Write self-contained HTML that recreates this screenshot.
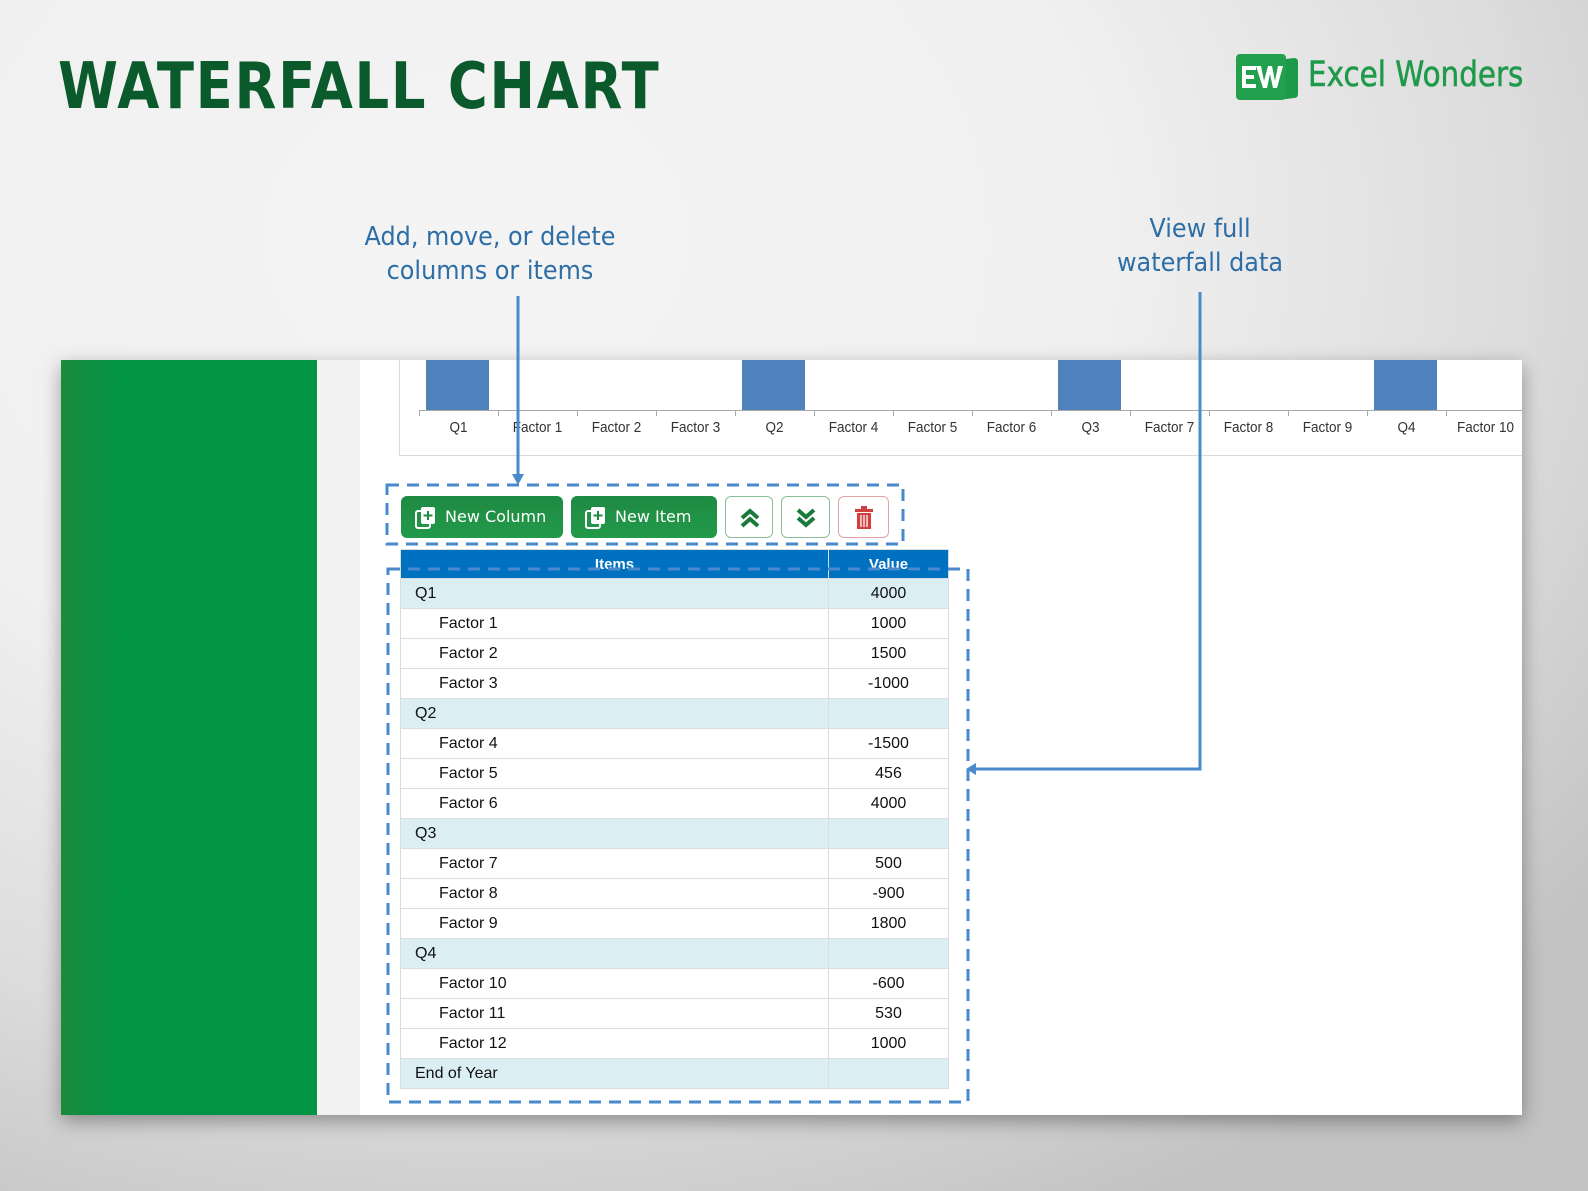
<!DOCTYPE html>
<html><head><meta charset="utf-8">
<style>
*{margin:0;padding:0;box-sizing:border-box}
body{width:1588px;height:1191px;overflow:hidden;position:relative;font-family:"Liberation Sans",Arial,sans-serif;
background:radial-gradient(ellipse 1400px 1100px at 30% 20%,#f4f4f4 0%,#f0f0f0 45%,#dcdcdc 75%,#c2c2c2 100%);}
.abs{position:absolute}
.title{left:58px;top:50px;font-size:64px;font-weight:bold;color:#0b5a2c;letter-spacing:2px;font-family:"DejaVu Sans","Liberation Sans",sans-serif;transform:scaleX(0.85);transform-origin:left}
.logo-t{left:1308px;top:55px;font-size:35px;color:#1e9a4a;font-family:"DejaVu Sans","Liberation Sans",sans-serif;transform:scaleX(0.84);transform-origin:left;-webkit-text-stroke:0.6px #1e9a4a}
.ann{font-size:26px;color:#2e6ea6;text-align:center;line-height:34px;font-family:"DejaVu Sans","Liberation Sans",sans-serif;transform:scaleX(0.92)}
.panel{left:61px;top:360px;width:1461px;height:755px;background:#fff;box-shadow:0 6px 18px rgba(0,0,0,.35);overflow:hidden}
.side{left:0;top:0;width:256px;height:755px;background:linear-gradient(90deg,#1a8a3e 0%,#009444 25%,#009444 100%)}
.strip{left:256px;top:0;width:43px;height:755px;background:#f2f2f2}
.cat{font-size:15px;color:#333;text-align:center;width:79px;top:59px;transform:scaleX(0.9)}
.bar{background:#4f81bd;top:0;height:50px;width:63px}
.btn{top:136px;height:42px;border-radius:6px}
.gbtn{background:linear-gradient(180deg,#1e8a42,#229a4a);color:#fff;font-size:16px;line-height:42px;font-family:"DejaVu Sans","Liberation Sans",sans-serif}
.obtn{background:#fff;border:1.5px solid #8bbf9a}
table{border-collapse:collapse;position:absolute;left:339px;top:189px;width:549px;font-size:16px;color:#111}
td{height:30px;border:1px solid #dcdcdc;padding:0}
td.v{text-align:center;width:120px}
tr.q td{background:#daeef3}
tr.h td{background:#0070c0;color:#fff;font-weight:bold;height:29px;text-align:center;font-size:15px}
td.i1{padding-left:14px}
td.i2{padding-left:38px}
</style></head><body>
<div class="abs title">WATERFALL CHART</div>
<svg class="abs" style="left:1234px;top:52px" width="66" height="50" viewBox="0 0 66 50">
<path d="M44 8 L60 6 Q64 6 64 10 L64 42 Q64 46 60 46 L44 48 Z" fill="#1c9a48"/>
<rect x="2" y="2" width="50" height="46" rx="4" fill="#22a04e"/>
<path d="M8 14 H22 V18 H12 V23 H20 V27 H12 V32 H22 V36 H8 Z" fill="#fff"/>
<path d="M22 14 H27 L30 29 L34 14 H38 L41 29 L44 14 H49 L43 36 H39 L36 22 L33 36 H29 Z" fill="#fff"/>
</svg>
<div class="abs logo-t">Excel Wonders</div>
<div class="abs ann" style="left:340px;top:220px;width:300px">Add, move, or delete<br>columns or items</div>
<div class="abs ann" style="left:1050px;top:212px;width:300px">View full<br>waterfall data</div>

<div class="abs panel">
<div class="abs side"></div>
<div class="abs strip"></div>
<div class="abs" style="left:338px;top:-2px;width:1130px;height:98px;border:1px solid #d9d9d9;border-top:none;border-right:none"></div>
<div class="abs bar" style="left:365px"></div>
<div class="abs bar" style="left:681px"></div>
<div class="abs bar" style="left:997px"></div>
<div class="abs bar" style="left:1313px"></div>
<div class="abs" style="left:358px;top:50px;width:1110px;height:1px;background:#aaa"></div>
<svg class="abs" style="left:358px;top:50px" width="1110" height="8">
<g stroke="#aaa" stroke-width="1">
<line x1="0.5" y1="0" x2="0.5" y2="6"/><line x1="79.5" y1="0" x2="79.5" y2="6"/><line x1="158.5" y1="0" x2="158.5" y2="6"/><line x1="237.5" y1="0" x2="237.5" y2="6"/><line x1="316.5" y1="0" x2="316.5" y2="6"/><line x1="395.5" y1="0" x2="395.5" y2="6"/><line x1="474.5" y1="0" x2="474.5" y2="6"/><line x1="553.5" y1="0" x2="553.5" y2="6"/><line x1="632.5" y1="0" x2="632.5" y2="6"/><line x1="711.5" y1="0" x2="711.5" y2="6"/><line x1="790.5" y1="0" x2="790.5" y2="6"/><line x1="869.5" y1="0" x2="869.5" y2="6"/><line x1="948.5" y1="0" x2="948.5" y2="6"/><line x1="1027.5" y1="0" x2="1027.5" y2="6"/>
</g></svg>
<div class="abs cat" style="left:358px">Q1</div>
<div class="abs cat" style="left:437px">Factor 1</div>
<div class="abs cat" style="left:516px">Factor 2</div>
<div class="abs cat" style="left:595px">Factor 3</div>
<div class="abs cat" style="left:674px">Q2</div>
<div class="abs cat" style="left:753px">Factor 4</div>
<div class="abs cat" style="left:832px">Factor 5</div>
<div class="abs cat" style="left:911px">Factor 6</div>
<div class="abs cat" style="left:990px">Q3</div>
<div class="abs cat" style="left:1069px">Factor 7</div>
<div class="abs cat" style="left:1148px">Factor 8</div>
<div class="abs cat" style="left:1227px">Factor 9</div>
<div class="abs cat" style="left:1306px">Q4</div>
<div class="abs cat" style="left:1385px">Factor 10</div>

<div class="abs btn gbtn" style="left:340px;width:162px"><svg class="abs" style="left:14px;top:10px" width="22" height="24" viewBox="0 0 22 24"><rect x="1" y="5" width="14" height="17" rx="2" fill="none" stroke="#fff" stroke-width="2"/><rect x="6" y="1" width="14" height="17" rx="2" fill="#fff"/><path d="M13 5v9M8.5 9.5h9" stroke="#1e8a42" stroke-width="2"/></svg><span style="position:absolute;left:44px">New Column</span></div>
<div class="abs btn gbtn" style="left:510px;width:146px"><svg class="abs" style="left:14px;top:10px" width="22" height="24" viewBox="0 0 22 24"><rect x="1" y="5" width="14" height="17" rx="2" fill="none" stroke="#fff" stroke-width="2"/><rect x="6" y="1" width="14" height="17" rx="2" fill="#fff"/><path d="M13 5v9M8.5 9.5h9" stroke="#1e8a42" stroke-width="2"/></svg><span style="position:absolute;left:44px">New Item</span></div>
<div class="abs btn obtn" style="left:664px;width:48px"><svg class="abs" style="left:12px;top:9px" width="24" height="24" viewBox="0 0 24 24"><path d="M4 12l8-7 8 7M4 20l8-7 8 7" fill="none" stroke="#1a7a3a" stroke-width="4"/></svg></div>
<div class="abs btn obtn" style="left:720px;width:49px"><svg class="abs" style="left:12px;top:9px" width="24" height="24" viewBox="0 0 24 24"><path d="M4 4l8 7 8-7M4 12l8 7 8-7" fill="none" stroke="#1a7a3a" stroke-width="4"/></svg></div>
<div class="abs btn obtn" style="left:777px;width:51px;border-color:#e3a3a3"><svg class="abs" style="left:14px;top:9px" width="22" height="24" viewBox="0 0 22 24"><rect x="2" y="3" width="18" height="3" fill="#d04040"/><rect x="8" y="0" width="6" height="3" fill="#d04040"/><rect x="4" y="7" width="14" height="16" fill="#d04040"/><path d="M8 9v12M11 9v12M14 9v12" stroke="#fff" stroke-width="1.3"/></svg></div>

<table>
<tr class="h"><td>Items</td><td class="v">Value</td></tr>
<tr class="q"><td class="i1">Q1</td><td class="v">4000</td></tr>
<tr><td class="i2">Factor 1</td><td class="v">1000</td></tr>
<tr><td class="i2">Factor 2</td><td class="v">1500</td></tr>
<tr><td class="i2">Factor 3</td><td class="v">-1000</td></tr>
<tr class="q"><td class="i1">Q2</td><td class="v"></td></tr>
<tr><td class="i2">Factor 4</td><td class="v">-1500</td></tr>
<tr><td class="i2">Factor 5</td><td class="v">456</td></tr>
<tr><td class="i2">Factor 6</td><td class="v">4000</td></tr>
<tr class="q"><td class="i1">Q3</td><td class="v"></td></tr>
<tr><td class="i2">Factor 7</td><td class="v">500</td></tr>
<tr><td class="i2">Factor 8</td><td class="v">-900</td></tr>
<tr><td class="i2">Factor 9</td><td class="v">1800</td></tr>
<tr class="q"><td class="i1">Q4</td><td class="v"></td></tr>
<tr><td class="i2">Factor 10</td><td class="v">-600</td></tr>
<tr><td class="i2">Factor 11</td><td class="v">530</td></tr>
<tr><td class="i2">Factor 12</td><td class="v">1000</td></tr>
<tr class="q"><td class="i1">End of Year</td><td class="v"></td></tr>
</table>
</div>

<svg class="abs" style="left:0;top:0" width="1588" height="1191">
<g fill="none" stroke="#4a89cc" stroke-width="3" stroke-dasharray="12 8">
<rect x="387" y="485" width="516" height="59"/>
<rect x="388" y="569" width="580" height="533"/>
</g>
<g fill="none" stroke="#4a89cc" stroke-width="3">
<line x1="518" y1="296" x2="518" y2="476"/>
<polyline points="1200,292 1200,769 975,769"/>
</g>
<path d="M512 474 L524 474 L518 485 Z" fill="#4a89cc"/>
<path d="M976 763 L976 775 L966 769 Z" fill="#4a89cc"/>
</svg>
</body></html>
